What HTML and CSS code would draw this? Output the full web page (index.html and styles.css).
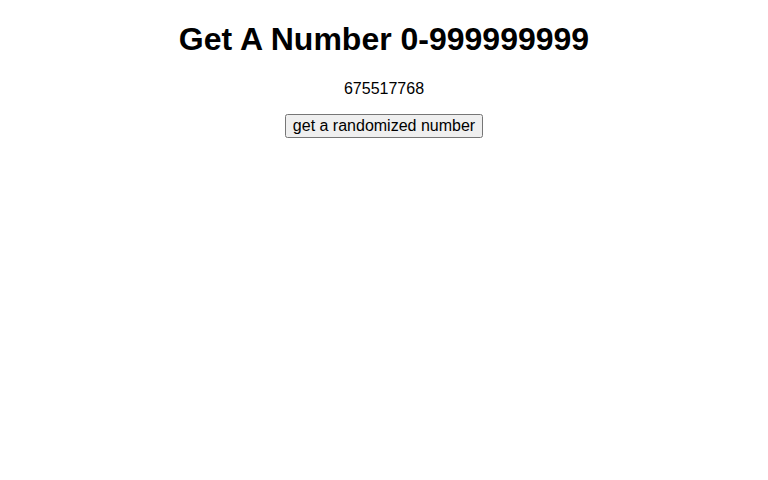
FILE: index.html
```html
<!DOCTYPE html>
<html>
<head>
    <title>Get A Number</title>
    <link rel="stylesheet" href="styles.css">
</head>
<body>
    <div class="container">
        <h1>Get A Number 0-999999999</h1>
        <p id="number">675517768</p>
        <button type="button" id="randomize">get a randomized number</button>
    </div>
</body>
</html>
```

FILE: styles.css
```css
body { font-family: "Liberation Sans", Arial, sans-serif; margin: 0; }
.container { text-align: center; padding-top: 1px; }
h1 { font-size: 32px; margin: 20px 0 22px; }
p { font-size: 16px; margin: 16px 0; }
button { font-family: "Liberation Sans", Arial, sans-serif; font-size: 16px; cursor: pointer; }
```
